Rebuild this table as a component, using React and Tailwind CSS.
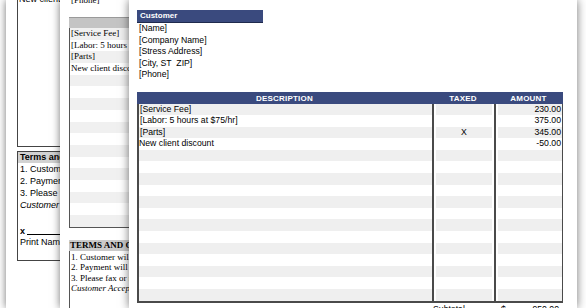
import React from 'react'

// Three stacked quote sheets: two older versions peeking out behind the current one.

const ITEMS = [
  { d: '[Service Fee]', t: '', a: '230.00' },
  { d: '[Labor: 5 hours at $75/hr]', t: '', a: '375.00' },
  { d: '[Parts]', t: 'X', a: '345.00' },
  { d: 'New client discount', t: '', a: '-50.00', flush: true },
]

const ROWS = [...ITEMS, ...Array.from({ length: 13 }, () => ({ d: '', t: '', a: '' }))]

const CUSTOMER = ['[Name]', '[Company Name]', '[Stress Address]', '[City, ST  ZIP]', '[Phone]']

const TERMS = [
  '1. Customer will be billed after indicating acceptance of this quote',
  '2. Payment will be due prior to provision or delivery of goods/services',
  '3. Please fax or mail the signed price quote to the address above',
]

const SANS = "font-['Liberation_Sans',Arial,sans-serif]"
const SERIF = "font-['Liberation_Serif','Times_New_Roman',serif]"

function SheetBack() {
  return (
    <section className={`relative z-0 h-full w-[54px] shrink-0 overflow-hidden bg-white shadow-[0_0_8px_rgba(0,0,0,0.55)] ${SANS}`}>
      <div className="w-[220px] pl-[11px] text-[9px] text-black">
        <div className="h-[153px] border-b border-l border-[#444]">
          <p className="mt-[-6px] pl-[1px] leading-[11px]">New client discount</p>
        </div>
        <div className="mt-[4px] h-[110px] border border-[#444]">
          <div className="h-[11px] bg-[#d2d2d2] pl-[2px] font-bold leading-[11px]">Terms and Conditions</div>
          {TERMS.map((t) => (
            <p key={t} className="whitespace-nowrap pl-[2px] leading-[12px]">{t}</p>
          ))}
          <p className="pl-[2px] italic leading-[12px]">Customer Acceptance (sign below):</p>
          <p className="mt-[15px] flex items-end pl-[2px] leading-[11px]">
            <span className="font-bold">x</span>
            <span className="ml-[2px] mb-[2px] w-[120px] border-b border-black" />
          </p>
          <p className="pl-[2px] leading-[11px]">Print Name:</p>
        </div>
      </div>
    </section>
  )
}

function SheetMiddle() {
  return (
    <section className={`relative z-10 h-full w-[69px] shrink-0 overflow-hidden bg-white shadow-[0_0_8px_rgba(0,0,0,0.55)] ${SERIF}`}>
      <div className="w-[260px] pl-[9px] text-[9px] text-black">
        <p className="mt-[-5px] pl-[2px] leading-[11px]">[Phone]</p>
        <div className="mt-[11px] h-[11px] border-t border-[#9a9a9a] bg-[#c4c4c4]" />
        <div className="border-b border-l border-[#555]">
          {ROWS.map((r, i) => (
            <div key={i} className={`h-[11.7px] whitespace-nowrap pl-[1px] leading-[11.7px] ${i % 2 === 0 ? 'bg-[#f0f0f0]' : 'bg-white'}`}>
              {r.d}
            </div>
          ))}
        </div>
        <div className="mt-[12px] h-[11px] bg-[#cacaca] pl-[1px] font-bold leading-[11px]">TERMS AND CONDITIONS</div>
        <div className="h-[80px] border-l border-[#555] pt-[1px]">
          {TERMS.map((t) => (
            <p key={t} className="whitespace-nowrap pl-[1px] leading-[10.5px]">{t}</p>
          ))}
          <p className="pl-[1px] italic leading-[10.5px]">Customer Acceptance (sign below):</p>
        </div>
      </div>
    </section>
  )
}

function SheetFront() {
  return (
    <section className={`relative z-20 h-full w-[448px] shrink-0 overflow-hidden bg-white pl-[8px] pt-[10px] shadow-[0_0_9px_rgba(0,0,0,0.55)] ${SANS}`}>
      <div className="h-[13px] w-[126px] border-b border-[#1f2a4d] bg-[#3a4a7e] pl-[3px] text-[8px] font-bold leading-[12px] text-white">
        Customer
      </div>
      <div className="pl-[2px] text-[8.7px] text-black">
        {CUSTOMER.map((c) => (
          <p key={c} className="whitespace-pre leading-[11.5px]">{c}</p>
        ))}
      </div>

      <div className="mt-[11px] w-[426px]">
        <div className="grid h-[12px] grid-cols-[295px_62px_1fr] bg-[#3a4a7e] text-[8px] font-bold leading-[13px] tracking-[0.2px] text-white">
          <span className="text-center">DESCRIPTION</span>
          <span className="text-center">TAXED</span>
          <span className="text-center">AMOUNT</span>
        </div>
        <div className="border-b-2 border-l-2 border-r border-[#4a4a4a] text-[8.7px] text-black">
          {ROWS.map((r, i) => {
            const stripe = i % 2 === 0 ? 'bg-[#efefef]' : 'bg-white'
            return (
              <div key={i} className="grid h-[11.6px] grid-cols-[293px_62px_1fr] leading-[11.6px]">
                <div className={`whitespace-nowrap ${r.flush ? 'pl-0' : 'pl-[1px]'} ${stripe}`}>{r.d}</div>
                <div className="border-l-2 border-[#4a4a4a] px-[2px]">
                  <div className={`h-full text-center ${stripe}`}>{r.t}</div>
                </div>
                <div className="border-l-2 border-[#4a4a4a] pl-[2px]">
                  <div className={`h-full pr-[1px] text-right ${stripe}`}>{r.a}</div>
                </div>
              </div>
            )
          })}
        </div>
        <div className="mt-[1px] flex text-[8.7px] leading-[11px] text-black">
          <span className="ml-[296px]">Subtotal</span>
          <span className="ml-[36px]">$</span>
          <span className="ml-auto pr-[4px]">950.00</span>
        </div>
      </div>
    </section>
  )
}

export default function App() {
  return (
    <div className="flex h-[308px] w-[586px] overflow-hidden bg-white pl-[6px]">
      <SheetBack />
      <SheetMiddle />
      <SheetFront />
    </div>
  )
}
